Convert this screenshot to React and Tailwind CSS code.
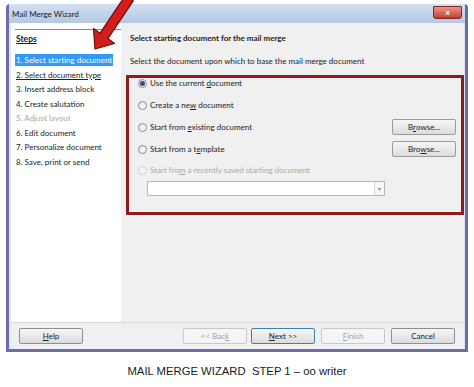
export default function App() {
  const font = { fontFamily: 'Lato, "Noto Sans", sans-serif' };
  const steps = [
    { t: "1. Select starting document", sel: true },
    { t: "2. Select document type", u: true },
    { t: "3. Insert address block" },
    { t: "4. Create salutation" },
    { t: "5. Adjust layout", dis: true },
    { t: "6. Edit document" },
    { t: "7. Personalize document" },
    { t: "8. Save, print or send" },
  ];
  const Radio = ({ on, dis }) => (
    <span
      className={`w-[9px] h-[9px] rounded-full border flex items-center justify-center shrink-0 ${
        dis ? "border-[#d0d0d0] bg-[#f4f4f4]" : "border-[#8a8a8a] bg-gradient-to-br from-[#e2e2e2] to-white"
      }`}
    >
      {on && <span className="w-[5px] h-[5px] rounded-full bg-[#2b4f8a]" />}
    </span>
  );
  const Btn = ({ children, w = "w-[64px]", cls = "" }) => (
    <div
      className={`${w} h-[16px] rounded-[2px] border flex items-center justify-center text-[8px] bg-gradient-to-b from-[#f6f6f6] to-[#dcdcdc] ${cls}`}
    >
      {children}
    </div>
  );
  return (
    <div className="w-[474px] h-[387px] bg-white relative overflow-hidden" style={font}>
      <div className="ml-[6px] mt-[4px] w-[462px] h-[348px] flex flex-col border-x-[3px] border-b-[3px] border-[#6c6ca6] bg-[#dfe5ee] rounded-t-[4px]">
        {/* title bar */}
        <div className="h-[19px] flex items-center justify-between bg-gradient-to-b from-[#d3e0ef] to-[#b3c9e3] pl-[3px] pr-[3px]">
          <span className="text-[8px] text-[#1a1a1a] mt-[1px]">Mail Merge Wizard</span>
          <div className="w-[29px] h-[13px] -mt-[3px] rounded-b-[3px] bg-gradient-to-b from-[#e8958b] to-[#c53a2c] border border-[#7a2a22] flex items-center justify-center text-white text-[8px] font-bold leading-none">
            x
          </div>
        </div>
        <div className="flex-1 flex flex-col ml-[2px] mr-[1px]">
          {/* body */}
          <div className="flex h-[299px]">
            <div className="w-[110px] bg-white pt-[6px]">
              <div className="ml-[4px] h-px bg-[#8a8a8a]" />
              <div className="ml-[5px] mt-[2px] text-[8.5px] font-bold underline text-[#222] leading-[14px]">Steps</div>
              <div className="mt-[7px] flex flex-col">
                {steps.map((s, i) => (
                  <div key={i} className="h-[14.5px] flex items-center pl-[4px]">
                    <span
                      className={`text-[8px] leading-[12px] px-[1px] whitespace-nowrap ${
                        s.sel ? "bg-[#3399ff] text-white" : s.dis ? "text-[#a8a8a8]" : "text-[#222]"
                      } ${s.u ? "underline" : ""}`}
                    >
                      {s.t}
                    </span>
                  </div>
                ))}
              </div>
            </div>
            <div className="flex-1 bg-[#f0f0f0] flex flex-col">
              <div className="pl-[9px] pt-[9px] text-[8px] font-bold text-[#222] leading-[12px]">
                Select starting document for the mail merge
              </div>
              <div className="pl-[9px] mt-[11px] text-[8px] text-[#222] leading-[12px]">
                Select the document upon which to base the mail merge document
              </div>
              <div className="ml-[5px] mt-[8px] h-[140px] border-[3px] border-[#8e1b1f] flex flex-col text-[8px] text-[#222]">
                <div className="h-[10px] flex items-center pl-[9px] gap-[3px]">
                  <Radio on /> <span>Use the current <u>d</u>ocument</span>
                </div>
                <div className="mt-[6px] h-[22px] flex items-center pl-[9px] gap-[3px]">
                  <Radio /> <span>Create a ne<u>w</u> document</span>
                </div>
                <div className="h-[22px] flex items-center pl-[9px] gap-[3px]">
                  <Radio /> <span className="flex-1">Start from <u>e</u>xisting document</span>
                  <Btn w="w-[64px]" cls="border-[#9a9a9a] text-[#222] mr-[5px]">B<u>r</u>owse...</Btn>
                </div>
                <div className="h-[22px] flex items-center pl-[9px] gap-[3px]">
                  <Radio /> <span className="flex-1">Start from a t<u>e</u>mplate</span>
                  <Btn w="w-[64px]" cls="border-[#9a9a9a] text-[#222] mr-[5px]">Bro<u>w</u>se...</Btn>
                </div>
                <div className="h-[20px] flex items-center pl-[9px] gap-[3px] text-[#a8a8a8]">
                  <Radio dis /> <span>Start fro<u>m</u> a recently saved starting document</span>
                </div>
                <div className="mt-[1px] ml-[18px] w-[238px] h-[15px] border border-[#b8b8b8] bg-white flex justify-end">
                  <div className="w-[10px] h-full border-l border-[#d8d8d8] bg-[#f6f6f6] flex items-center justify-center text-[6px] text-[#888]">
                    ▾
                  </div>
                </div>
              </div>
            </div>
          </div>
          {/* bottom */}
          <div className="flex-1 bg-[#f0f0f0] border-t border-[#d6d6d6] flex items-center pl-[8px]">
            <Btn cls="border-[#8e8e8e] text-[#222]"><span><u>H</u>elp</span></Btn>
            <Btn cls="ml-[100px] border-[#c8c8c8] text-[#a0a0a0] from-[#f4f4f4] to-[#f4f4f4]"><span>&lt;&lt; Bac<u>k</u></span></Btn>
            <Btn cls="ml-[4px] border-[#3c7fb1] text-[#222] from-[#eaf4fb] to-[#cfe4f3]"><span><u>N</u>ext &gt;&gt;</span></Btn>
            <Btn cls="ml-[6px] border-[#c8c8c8] text-[#a0a0a0] from-[#f4f4f4] to-[#f4f4f4]"><span><u>F</u>inish</span></Btn>
            <Btn cls="ml-[6px] border-[#8e8e8e] text-[#222]">Cancel</Btn>
          </div>
        </div>
      </div>
      <div className="mt-[11px] text-center text-[11.3px] text-[#1a1a1a]" style={{ fontFamily: '"Liberation Sans", Arial, sans-serif' }}>
        MAIL MERGE WIZARD&nbsp; STEP 1 – oo writer
      </div>
      {/* annotation arrow */}
      <svg className="absolute left-0 top-0" width="474" height="60" viewBox="0 0 474 60">
        <polygon
          points="125.3,-4.5 133.2,0.8 107.9,38.6 114.5,43.5 95,49 93.5,28.5 100.1,33.2"
          fill="#d41c1c"
          stroke="#6e0c0c"
          strokeWidth="1.2"
          strokeLinejoin="round"
        />
      </svg>
    </div>
  );
}
